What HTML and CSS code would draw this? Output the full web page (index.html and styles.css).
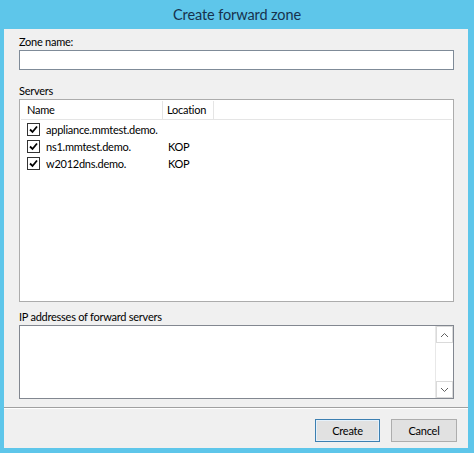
FILE: index.html
```html
<!DOCTYPE html>
<html>
<head>
<meta charset="utf-8">
<link rel="stylesheet" href="styles.css">
</head>
<body>
<div class="window">
  <div class="titlebar">Create forward zone</div>
  <div class="client">
    <div class="content">
      <div class="label first">Zone name:</div>
      <div class="input"></div>
      <div class="label servers">Servers</div>
      <div class="list">
        <div class="header">
          <div class="col name">Name</div>
          <div class="col location">Location</div>
          <div class="col filler"></div>
        </div>
        <div class="row">
          <div class="cell name"><span class="check"><svg viewBox="0 0 11 11" width="11" height="11"><path d="M2 5.5 L4.5 8 L9 2.5" fill="none" stroke="#000" stroke-width="1.8"/></svg></span>appliance.mmtest.demo.</div>
          <div class="cell loc"></div>
        </div>
        <div class="row">
          <div class="cell name"><span class="check"><svg viewBox="0 0 11 11" width="11" height="11"><path d="M2 5.5 L4.5 8 L9 2.5" fill="none" stroke="#000" stroke-width="1.8"/></svg></span>ns1.mmtest.demo.</div>
          <div class="cell loc">KOP</div>
        </div>
        <div class="row">
          <div class="cell name"><span class="check"><svg viewBox="0 0 11 11" width="11" height="11"><path d="M2 5.5 L4.5 8 L9 2.5" fill="none" stroke="#000" stroke-width="1.8"/></svg></span>w2012dns.demo.</div>
          <div class="cell loc">KOP</div>
        </div>
      </div>
      <div class="label ip">IP addresses of forward servers</div>
      <div class="textarea">
        <div class="text"></div>
        <div class="scrollbar">
          <div class="sbtn"><svg viewBox="0 0 9 6" width="9" height="6"><path d="M1 5 L4.5 1.5 L8 5" fill="none" stroke="#606060" stroke-width="1"/></svg></div>
          <div class="track"></div>
          <div class="sbtn"><svg viewBox="0 0 9 6" width="9" height="6"><path d="M1 1 L4.5 4.5 L8 1" fill="none" stroke="#606060" stroke-width="1"/></svg></div>
        </div>
      </div>
    </div>
    <div class="footer">
      <div class="button default">Create</div>
      <div class="button">Cancel</div>
    </div>
  </div>
</div>
</body>
</html>
```

FILE: styles.css
```css
html, body {
  margin: 0;
  padding: 0;
  background: #5ec6ea;
}
body {
  font-family: "Segoe UI", Lato, "Open Sans", sans-serif;
  font-size: 11px;
  letter-spacing: -0.25px;
  color: #000;
}
.window {
  width: 474px;
  height: 453px;
  background: #5ec6ea;
  display: flex;
  flex-direction: column;
}
.titlebar {
  height: 29px;
  display: flex;
  align-items: center;
  justify-content: center;
  font-size: 14.5px;
  letter-spacing: -0.1px;
  color: #17324d;
}
.client {
  margin: 0 6px 5px 4px;
  height: 419px;
  background: #f0f0f0;
  display: flex;
  flex-direction: column;
}
.content {
  padding: 0 14px 0 15px;
  height: 378px;
  border-bottom: 1px solid #a0a0a0;
  display: flex;
  flex-direction: column;
}
.label {
  height: 16px;
  line-height: 16px;
  white-space: nowrap;
}
.label.first { margin-top: 5px; }
.label.servers { margin-top: 13px; }
.label.ip { margin-top: 7px; }
.input {
  height: 18px;
  border: 1px solid #7f8b98;
  background: #fff;
}
.list {
  height: 200px;
  border: 1px solid #acacac;
  background: #fff;
  padding: 1px 1px 0 1px;
}
.header {
  display: flex;
  height: 18px;
  border-bottom: 1px solid #e5e5e5;
}
.col {
  line-height: 18px;
  height: 18px;
  box-sizing: border-box;
  padding-left: 6px;
}
.col.name {
  width: 142px;
  border-right: 1px solid #e5e5e5;
}
.col.location {
  width: 51px;
  border-right: 1px solid #e5e5e5;
  padding-left: 4px;
}
.col.filler { flex: 1; }
.row {
  display: flex;
  height: 17px;
  line-height: 17px;
}
.header + .row { margin-top: 1px; }
.cell.name {
  width: 142px;
  box-sizing: border-box;
  padding-left: 6px;
  display: flex;
  align-items: center;
  white-space: nowrap;
}
.cell.loc {
  padding-left: 5px;
}
.check {
  width: 11px;
  height: 11px;
  border: 1px solid #333;
  background: #fff;
  display: inline-flex;
  margin-right: 6px;
  flex: none;
}
.check svg { display: block; }
.textarea {
  height: 72px;
  border: 1px solid #828790;
  background: #fff;
  display: flex;
}
.text { flex: 1; }
.scrollbar {
  width: 17px;
  display: flex;
  flex-direction: column;
  background: #fff;
  border-left: 1px solid #e8e8e8;
}
.sbtn {
  height: 17px;
  box-sizing: border-box;
  border: 1px solid #dadada;
  display: flex;
  align-items: center;
  justify-content: center;
  background: #fff;
}
.track {
  flex: 1;
  background: #fff;
}
.footer {
  flex: 1;
  display: flex;
  justify-content: flex-end;
  align-items: flex-start;
  padding: 10px 11px 0 0;
  gap: 11px;
  border-top: 1px solid #fff;
}
.button {
  width: 66px;
  height: 23px;
  box-sizing: border-box;
  border: 1px solid #adadad;
  background: #e1e1e1;
  display: flex;
  align-items: center;
  justify-content: center;
}
.button.default {
  width: 65px;
  border: 1px solid #3c7fb1;
  box-shadow: inset 0 0 0 1px #e5f1fb;
}
```
